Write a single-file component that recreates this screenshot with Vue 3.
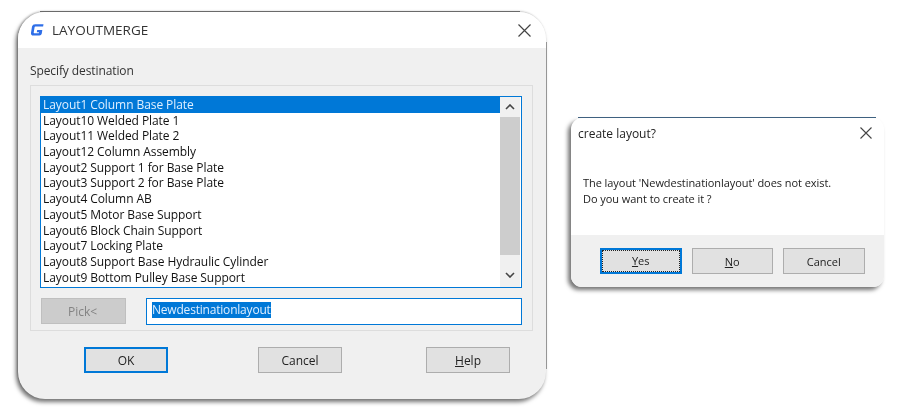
<script setup>
const layouts = [
  'Layout1 Column Base Plate',
  'Layout10 Welded Plate 1',
  'Layout11 Welded Plate 2',
  'Layout12 Column Assembly',
  'Layout2 Support 1 for Base Plate',
  'Layout3 Support 2 for Base Plate',
  'Layout4 Column AB',
  'Layout5 Motor Base Support',
  'Layout6 Block Chain Support',
  'Layout7 Locking Plate',
  'Layout8 Support Base Hydraulic Cylinder',
  'Layout9 Bottom Pulley Base Support'
]
</script>

<template>
  <div class="page">
    <section class="dialog merge">
      <header class="merge-title">
        <svg class="logo" width="16" height="14" viewBox="0 0 16 14">
          <path d="M14.5 1.2H6.2Q3.6 1.2 3 3.6L2 9.8Q1.6 12.6 4.4 12.6H10.4Q12.4 12.6 12.8 10.6L13.3 7H8.2L7.8 9.2H10L9.8 10.2H5.2Q4.6 10.2 4.7 9.6L5.6 4.2Q5.7 3.6 6.4 3.6H14.1Z" fill="#2f6fe8"/>
        </svg>
        <span class="merge-name">LAYOUTMERGE</span>
        <svg class="close" width="13" height="13" viewBox="0 0 13 13">
          <path d="M.5.5l12 12M12.5.5l-12 12" stroke="#444" stroke-width="1.2" fill="none"/>
        </svg>
      </header>
      <div class="merge-body">
        <div class="label">Specify destination</div>
        <div class="group">
          <div class="listbox">
            <ul class="items">
              <li v-for="(l, i) in layouts" :key="l" :class="{ selected: i === 0 }">{{ l }}</li>
            </ul>
            <div class="scrollbar">
              <div class="arrow up">
                <svg width="10" height="6" viewBox="0 0 10 6"><path d="M1 5l4-4 4 4" stroke="#444" stroke-width="1.6" fill="none"/></svg>
              </div>
              <div class="thumb"></div>
              <div class="arrow down">
                <svg width="10" height="6" viewBox="0 0 10 6"><path d="M1 1l4 4 4-4" stroke="#444" stroke-width="1.6" fill="none"/></svg>
              </div>
            </div>
          </div>
          <div class="pick-row">
            <div class="btn pick">Pick&lt;</div>
            <div class="input"><span class="sel">Newdestinationlayout</span></div>
          </div>
        </div>
        <div class="merge-actions">
          <div class="btn wide default">OK</div>
          <div class="btn wide">Cancel</div>
          <div class="btn wide help"><u>H</u>elp</div>
        </div>
      </div>
    </section>

    <section class="dialog create">
      <header class="create-title">
        <span>create layout?</span>
        <svg width="12" height="12" viewBox="0 0 12 12">
          <path d="M.5.5l11 11M11.5.5l-11 11" stroke="#444" stroke-width="1.1" fill="none"/>
        </svg>
      </header>
      <div class="message">
        <p>The layout 'Newdestinationlayout' does not exist.</p>
        <p>Do you want to create it ?</p>
      </div>
      <footer class="create-actions">
        <div class="btn small focus"><span class="dots"><u>Y</u>es</span></div>
        <div class="btn small"><u>N</u>o</div>
        <div class="btn small">Cancel</div>
      </footer>
    </section>
  </div>
</template>

<style scoped>
.page {
  width: 922px;
  height: 412px;
  box-sizing: border-box;
  padding: 12px 0 0 18px;
  display: flex;
  align-items: flex-start;
  background: #fff;
  overflow: hidden;
  font-family: "Open Sans", "Noto Sans", sans-serif;
  font-size: 12px;
  color: #222;
  filter: blur(0.3px);
}
.dialog {
  background: #f0f0f0;
  position: relative;
}
.dialog::before {
  content: "";
  position: absolute;
  top: -1px;
  height: 1px;
}
.merge {
  width: 528px;
  height: 387px;
  flex: none;
  border-radius: 27px;
  box-shadow: -2px 3px 4px rgba(0, 0, 0, 0.55), -1px -1px 2px rgba(0, 0, 0, 0.22);
}
.merge::before {
  left: 22px;
  right: 26px;
  background: #6a6a6a;
}
.merge::after {
  content: "";
  position: absolute;
  top: 30px;
  bottom: 30px;
  right: -1px;
  width: 1px;
  background: rgba(80, 80, 80, 0.55);
}
.merge-title {
  height: 36px;
  background: #fff;
  border-radius: 27px 27px 0 0;
  display: flex;
  align-items: center;
  padding: 0 15px 0 11px;
}
.merge-name {
  margin-left: 7px;
  font-size: 13.5px;
  color: #333;
  flex: 1;
}
.merge-body { padding: 0 13px 0 12px; }
.label {
  height: 37px;
  line-height: 45px;
  color: #333;
  letter-spacing: -0.1px;
}
.group {
  height: 246px;
  box-sizing: border-box;
  border: 1px solid #ddd;
  padding: 10px 10px 0 9px;
}
.listbox {
  height: 192px;
  box-sizing: border-box;
  border: 1px solid #0078d7;
  background: #fff;
  display: flex;
}
.items {
  list-style: none;
  margin: 0;
  padding: 0;
  flex: 1;
}
.items li {
  height: 15.7px;
  line-height: 16.4px;
  padding-left: 2px;
  color: #111;
  white-space: nowrap;
  letter-spacing: -0.07px;
}
.items li.selected {
  background: #0078d7;
  color: #dfefff;
}
.scrollbar {
  width: 20px;
  margin-right: 1px;
  background: #f0f0f0;
  display: flex;
  flex-direction: column;
}
.arrow {
  height: 20px;
  display: flex;
  align-items: center;
  justify-content: center;
  flex: none;
}
.thumb {
  height: 138px;
  background: #cdcdcd;
  flex: none;
}
.arrow.down {
  height: 30px;
  padding-top: 10px;
  box-sizing: border-box;
}
.pick-row {
  display: flex;
  gap: 20px;
  margin-top: 10px;
  padding-left: 1px;
}
.btn {
  box-sizing: border-box;
  display: flex;
  align-items: center;
  justify-content: center;
  background: #e1e1e1;
  border: 1px solid #adadad;
  color: #222;
}
.pick {
  width: 85px;
  height: 26px;
  background: #ccc;
  border-color: #bfbfbf;
  color: #838383;
  padding-right: 2px;
}
.input {
  width: 376px;
  height: 27px;
  box-sizing: border-box;
  border: 1px solid #0078d7;
  background: #fff;
  padding: 2px 0 0 5px;
}
.sel {
  display: inline-block;
  background: #0078d7;
  color: #dfefff;
  line-height: 16px;
  letter-spacing: -0.2px;
}
.merge-actions {
  display: flex;
  gap: 90px;
  padding: 16px 0 0 54px;
}
.wide {
  width: 84px;
  height: 26px;
}
.help {
  margin-left: -6px;
}
.default {
  border: 2px solid #0078d7;
}
.create {
  width: 313px;
  height: 169px;
  flex: none;
  margin: 106px 0 0 25px;
  background: #fff;
  border-radius: 11px;
  display: flex;
  flex-direction: column;
  box-shadow: -3px 3px 4px rgba(0, 0, 0, 0.55);
}
.create::before {
  left: 7px;
  right: 8px;
  background: #3f6180;
}
.create-title {
  height: 30px;
  display: flex;
  align-items: center;
  justify-content: space-between;
  padding: 0 12px 0 7px;
  color: #222;
}
.message {
  padding: 27px 0 0 12px;
  height: 87px;
  box-sizing: border-box;
  font-size: 11px;
  color: #222;
  flex: none;
  letter-spacing: -0.06px;
}
.message p {
  margin: 0;
  line-height: 16px;
}
.create-actions {
  flex: 1;
  background: #f0f0f0;
  border-radius: 0 0 11px 11px;
  display: flex;
  gap: 10px;
  padding: 13px 0 0 29px;
}
.small {
  width: 81.5px;
  height: 26px;
  font-size: 11px;
}
.focus {
  border: 2px solid #0078d7;
}
.dots {
  align-self: stretch;
  flex: 1;
  border: 1px dotted #222;
  text-align: center;
  line-height: 20px;
}
</style>
